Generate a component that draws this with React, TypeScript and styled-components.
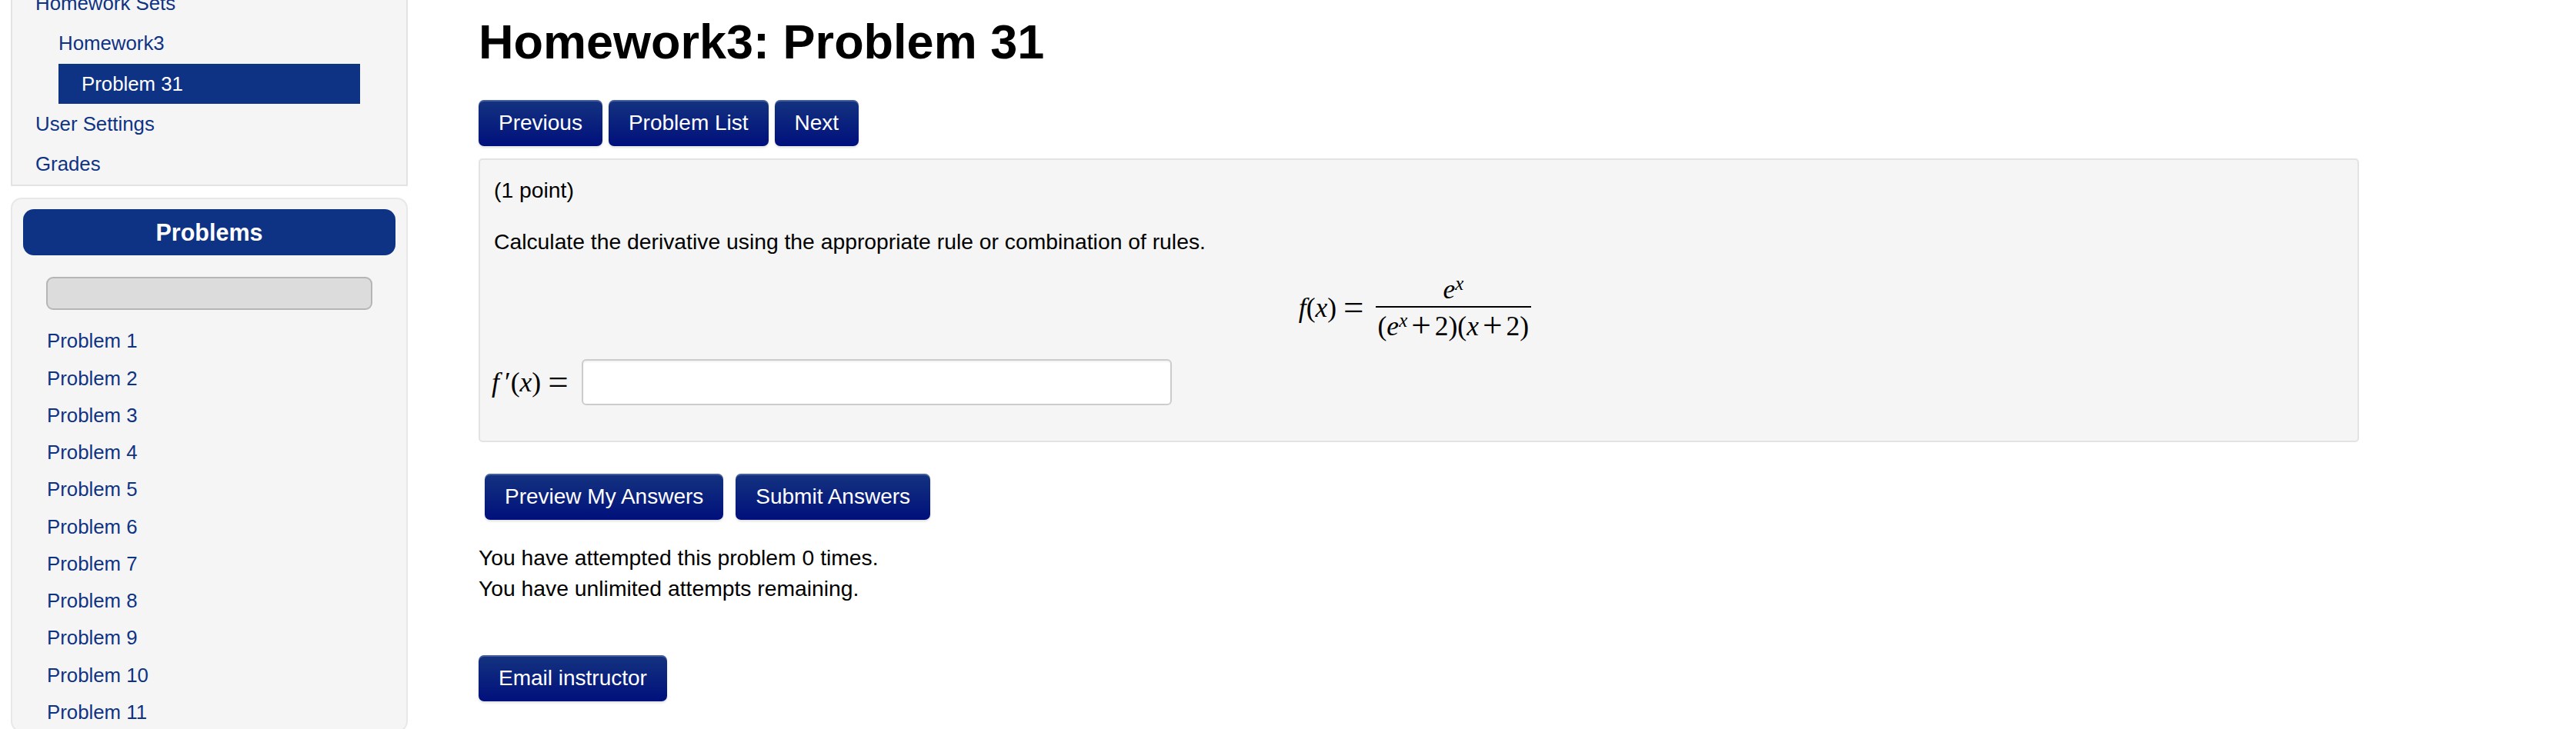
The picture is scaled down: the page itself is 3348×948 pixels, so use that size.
import React from "react";
import styled, { createGlobalStyle } from "styled-components";

const navy = "#0f3384";
const sans = `"Liberation Sans", Arial, sans-serif`;
const serif = `"Liberation Serif", "Times New Roman", serif`;

const problems = Array.from({ length: 11 }, (_, i) => `Problem ${i + 1}`);

function App() {
  return (
    <>
      <GlobalStyle />
      <Page>
        <Sidebar>
          <SiteNav>
            <NavLink>Homework Sets</NavLink>
            <SubNav>
              <NavLink>Homework3</NavLink>
              <ActiveLink>Problem 31</ActiveLink>
            </SubNav>
            <NavLink>User Settings</NavLink>
            <NavLink>Grades</NavLink>
          </SiteNav>
          <ProblemsPanel>
            <PanelHeader>Problems</PanelHeader>
            <ProgressTrack />
            <ProblemList>
              {problems.map((name) => (
                <ProblemLink key={name}>{name}</ProblemLink>
              ))}
            </ProblemList>
          </ProblemsPanel>
        </Sidebar>
        <Main>
          <Title>Homework3: Problem 31</Title>
          <ButtonRow>
            <Button>Previous</Button>
            <Button>Problem List</Button>
            <Button>Next</Button>
          </ButtonRow>
          <ProblemBox>
            <Points>(1 point)</Points>
            <Question>
              Calculate the derivative using the appropriate rule or combination of rules.
            </Question>
            <DisplayMath>
              <MathText>
                <i>f</i>(<i>x</i>)<Relation>=</Relation>
              </MathText>
              <Fraction>
                <Numerator>
                  <i>e</i>
                  <Sup>x</Sup>
                </Numerator>
                <Denominator>
                  (<i>e</i>
                  <Sup>x</Sup>
                  <Operator>+</Operator>2)(<i>x</i>
                  <Operator>+</Operator>2)
                </Denominator>
              </Fraction>
            </DisplayMath>
            <AnswerRow>
              <AnswerLabel>
                <i>f</i>&thinsp;′(<i>x</i>)<Relation>=</Relation>
              </AnswerLabel>
              <AnswerInput type="text" />
            </AnswerRow>
          </ProblemBox>
          <SubmitRow>
            <Button>Preview My Answers</Button>
            <Button>Submit Answers</Button>
          </SubmitRow>
          <Attempts>
            You have attempted this problem 0 times.
            <br />
            You have unlimited attempts remaining.
          </Attempts>
          <Button>Email instructor</Button>
        </Main>
      </Page>
    </>
  );
}

const GlobalStyle = createGlobalStyle`
  html, body {
    margin: 0;
    height: 948px;
    overflow: hidden;
    background: #fff;
    font-family: ${sans};
  }
`;

const Page = styled.div`
  display: flex;
  align-items: flex-start;
  height: 948px;
  overflow: hidden;
`;

const Sidebar = styled.aside`
  flex: none;
  width: 516px;
  margin-left: 14px;
  margin-right: 92px;
  display: flex;
  flex-direction: column;
  gap: 15px;
`;

const SiteNav = styled.nav`
  margin-top: -22px;
  padding: 0 0 1px 30px;
  background: #f5f5f5;
  border: 2px solid #e3e3e3;
  border-top: 0;
`;

const NavLink = styled.div`
  font-size: 25.8px;
  line-height: 52.25px;
  height: 52.25px;
  color: ${navy};
`;

const SubNav = styled.div`
  margin-left: 30px;
  width: 392px;
`;

const ActiveLink = styled(NavLink)`
  background: ${navy};
  color: #fff;
  padding-left: 30px;
`;

const ProblemsPanel = styled.section`
  padding: 13px 14px 0;
  background: #f5f5f5;
  border: 2px solid #e8e8e8;
  border-radius: 14px;
`;

const PanelHeader = styled.div`
  height: 60px;
  line-height: 60px;
  text-align: center;
  font-size: 30.5px;
  font-weight: 700;
  color: #fff;
  background: ${navy};
  border-radius: 14px;
`;

const ProgressTrack = styled.div`
  height: 43px;
  box-sizing: border-box;
  margin: 28px 16px 16px 30px;
  width: 424px;
  background: #dcdcdc;
  border: 2px solid #b5b5b5;
  border-radius: 9px;
`;

const ProblemList = styled.div`
  padding-left: 31px;
`;

const ProblemLink = styled.div`
  font-size: 25.8px;
  line-height: 48.25px;
  height: 48.25px;
  color: ${navy};
`;

const Main = styled.main`
  flex: none;
  width: 2444px;
`;

const Title = styled.h1`
  margin: 23px 0 44.5px;
  font-size: 63px;
  line-height: 62.5px;
  font-weight: 700;
  color: #000;
`;

const ButtonRow = styled.div`
  display: flex;
  gap: 8px;
  margin-bottom: 16px;
`;

const Button = styled.button`
  box-sizing: border-box;
  height: 60px;
  padding: 0 26px;
  font-family: ${sans};
  font-size: 28px;
  color: #fff;
  background: linear-gradient(to bottom, #14337f 0%, #00107c 100%);
  border: 0;
  border-radius: 7px;
  box-shadow: inset 0 2px 0 rgba(255, 255, 255, 0.22), 0 2px 3px rgba(0, 0, 0, 0.12);
`;

const ProblemBox = styled.div`
  box-sizing: border-box;
  height: 369px;
  padding: 0 18px;
  background: #f5f5f5;
  border: 2px solid #e3e3e3;
  border-radius: 5px;
`;

const Points = styled.p`
  margin: 19px 0 0;
  font-size: 28.3px;
  line-height: 40px;
  color: #000;
`;

const Question = styled.p`
  margin: 27px 0 0;
  font-size: 28.3px;
  line-height: 40px;
  color: #000;
`;

const DisplayMath = styled.div`
  display: flex;
  justify-content: center;
  align-items: center;
  gap: 15px;
  margin: 22px 10px 0 0;
  font-family: ${serif};
  font-size: 35.5px;
  color: #000;
`;

const MathText = styled.span`
  white-space: nowrap;
`;

const Relation = styled.span`
  margin-left: 9px;
  font-size: 132%;
  line-height: 0;
  vertical-align: -0.06em;
`;

const Operator = styled.span`
  margin: 0 5px;
  font-size: 128%;
  line-height: 0;
  vertical-align: -0.05em;
`;

const Fraction = styled.span`
  display: inline-flex;
  flex-direction: column;
  align-items: center;
  line-height: 40px;
`;

const Numerator = styled.span`
  padding: 0 0 2px;
`;

const Denominator = styled.span`
  padding: 4px 3px 0;
  border-top: 2px solid #000;
`;

const Sup = styled.sup`
  font-size: 70%;
  font-style: italic;
  line-height: 0;
  vertical-align: 0.45em;
`;

const AnswerRow = styled.div`
  display: flex;
  align-items: center;
  gap: 17px;
  margin: 23px 0 0 -3px;
`;

const AnswerLabel = styled.span`
  font-family: ${serif};
  font-size: 35.5px;
  white-space: nowrap;
  color: #000;
`;

const AnswerInput = styled.input`
  box-sizing: border-box;
  width: 767px;
  height: 60px;
  background: #fff;
  border: 2px solid #cccccc;
  border-radius: 6px;
  box-shadow: inset 0 2px 2px rgba(0, 0, 0, 0.05);
`;

const SubmitRow = styled.div`
  display: flex;
  gap: 16px;
  margin: 41px 0 0 8px;
`;

const Attempts = styled.p`
  margin: 29px 0 67px;
  font-size: 28.3px;
  line-height: 40px;
  color: #000;
`;

export default App;
